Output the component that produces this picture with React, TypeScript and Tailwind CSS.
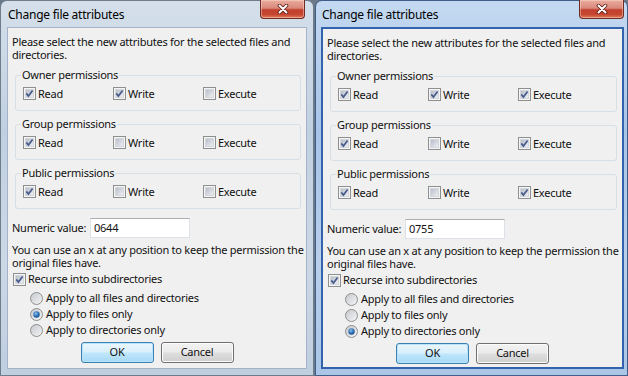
import React from 'react';

type Dialog = {
  value: string;
  perms: boolean[][];
  apply: number;
  active: boolean;
};

const dialogs: Dialog[] = [
  {
    value: '0644',
    perms: [
      [true, true, false],
      [true, false, false],
      [true, false, false],
    ],
    apply: 1,
    active: false,
  },
  {
    value: '0755',
    perms: [
      [true, true, true],
      [true, false, true],
      [true, false, true],
    ],
    apply: 2,
    active: true,
  },
];

const groups = ['Owner permissions', 'Group permissions', 'Public permissions'];
const cols = ['Read', 'Write', 'Execute'];
const applyTo = ['Apply to all files and directories', 'Apply to files only', 'Apply to directories only'];

function CheckBox({ on }: { on: boolean }) {
  return (
    <svg width="13" height="13" viewBox="0 0 13 13" className="shrink-0">
      <defs>
        <linearGradient id="cbfill" x1="0" y1="0" x2="1" y2="1">
          <stop offset="0" stopColor="#b5bac6" />
          <stop offset="1" stopColor="#f1f2f6" />
        </linearGradient>
      </defs>
      <rect x="0.5" y="0.5" width="12" height="12" fill="#f5f5f5" stroke="#8e8f8f" />
      <rect x="2.5" y="2.5" width="8" height="8" fill="url(#cbfill)" stroke="#d3d6db" />
      {on && <path d="M3.3 6.4 L5.4 9 L9.6 3.4" stroke="#485c8c" strokeWidth="1.7" fill="none" />}
    </svg>
  );
}

function Radio({ on }: { on: boolean }) {
  return (
    <svg width="13" height="13" viewBox="0 0 13 13" className="shrink-0">
      <defs>
        <linearGradient id="rbfill" x1="0" y1="0" x2="1" y2="1">
          <stop offset="0" stopColor="#c2c6cc" />
          <stop offset="1" stopColor="#f7f7f7" />
        </linearGradient>
        <radialGradient id="rbdot" cx="0.4" cy="0.35" r="0.7">
          <stop offset="0" stopColor="#8cc3ee" />
          <stop offset="0.6" stopColor="#2c6db0" />
          <stop offset="1" stopColor="#174d87" />
        </radialGradient>
      </defs>
      <circle cx="6.5" cy="6.5" r="6" fill="url(#rbfill)" stroke="#8e8f8f" />
      {on && <circle cx="6.5" cy="6.5" r="3.2" fill="url(#rbdot)" />}
    </svg>
  );
}

function CloseButton() {
  return (
    <div className="w-[45px] h-[19px] -mt-[1px] flex items-center justify-center rounded-b-[4px] border border-t-0 border-[#6e2b23] bg-[linear-gradient(180deg,#e9ad9f_0%,#d9887a_45%,#c23f2c_55%,#c6462f_80%,#de7d58_100%)] shadow-[inset_0_0_0_1px_rgba(255,220,210,0.45)]">
      <svg width="12" height="10" viewBox="0 0 12 10">
        <path d="M2.5 1.5 L9.5 8.5 M9.5 1.5 L2.5 8.5" stroke="#5c1b12" strokeWidth="3.6" strokeLinecap="round" />
        <path d="M2.5 1.5 L9.5 8.5 M9.5 1.5 L2.5 8.5" stroke="#ffffff" strokeWidth="2" strokeLinecap="round" />
      </svg>
    </div>
  );
}

function Window({ d }: { d: Dialog }) {
  return (
    <div
      className={
        d.active
          ? 'w-[313px] h-[376px] flex flex-col rounded-t-[7px] border border-[#3e5f8a] pl-[5px] pr-[3px] pb-[6px] bg-[linear-gradient(180deg,#c4d9f1_0%,#a8c4e7_35%,#b9d0ec_70%,#aac5e6_100%)]'
          : 'w-[314px] h-[376px] flex flex-col rounded-t-[7px] border border-[#6e7c8c] px-[6px] pb-[6px] bg-[linear-gradient(180deg,#d4dfea_0%,#c1d0e1_35%,#ccd8e6_70%,#bfcee0_100%)]'
      }
    >
      <div className="h-[26px] flex items-start justify-between">
        <span className="pt-[6px] pl-[1px] text-[12px] leading-[15px] text-black">Change file attributes</span>
        <div className={d.active ? 'mr-0' : 'mr-[2px]'}>
          <CloseButton />
        </div>
      </div>
      <div
        className={
          d.active
            ? 'flex-1 flex flex-col bg-[#f0f0f0] border-2 border-[#3263ac]'
            : 'flex-1 flex flex-col bg-[#f0f0f0] border border-[#a3b4c8]'
        }
      >
        <p className="px-[4px] pt-[7px] text-[11px] leading-[13px] whitespace-nowrap">
          Please select the new attributes for the selected files and
          <br />
          directories.
        </p>

        <div className="mt-[14px] ml-[7px] mr-[5px] flex flex-col gap-[13px]">
          {groups.map((g, gi) => (
            <div key={g} className="h-[36px] border border-[#d5dfe5] rounded-[3px]">
              <div className="-mt-[8px] ml-[5px] w-fit px-[1px] bg-[#f0f0f0] text-[11px] leading-[13px]">{g}</div>
              <div className="mt-[6px] ml-[7px] flex">
                {cols.map((c, ci) => (
                  <div key={c} className="w-[90px] flex items-center gap-[2px] text-[11px] leading-[13px]">
                    <CheckBox on={d.perms[gi][ci]} />
                    <span>{c}</span>
                  </div>
                ))}
              </div>
            </div>
          ))}
        </div>

        <div className="mt-[9px] ml-[4px] flex items-center text-[11px]">
          <span className="w-[78px]">Numeric value:</span>
          <div className="w-[100px] h-[20px] flex items-center pl-[3px] bg-white border border-[#dde2e8] border-t-[#abadb3]">
            {d.value}
          </div>
        </div>

        <p className="mt-[5px] px-[4px] text-[11px] leading-[13px] whitespace-nowrap">
          You can use an x at any position to keep the permission the
          <br />
          original files have.
        </p>

        <div className="mt-[4px] ml-[5px] h-[13px] flex items-center gap-[2px] text-[11px]">
          <CheckBox on />
          <span>Recurse into subdirectories</span>
        </div>

        <div className="mt-[4px] ml-[22px] flex flex-col">
          {applyTo.map((a, ai) => (
            <div key={a} className="h-[16px] flex items-center gap-[3px] text-[11px]">
              <Radio on={ai === d.apply} />
              <span>{a}</span>
            </div>
          ))}
        </div>

        <div className="mt-[4px] flex justify-center gap-[7px] text-[11px]">
          <button className="w-[73px] h-[21px] rounded-[3px] border border-[#3c7fb1] bg-[linear-gradient(180deg,#eaf6fd_0%,#d9f0fc_45%,#bee6fd_55%,#a7d9f5_100%)] shadow-[inset_0_0_0_1px_#b9e3fa]">
            OK
          </button>
          <button className="w-[73px] h-[21px] rounded-[3px] border border-[#707070] bg-[linear-gradient(180deg,#f2f2f2_0%,#ebebeb_45%,#dddddd_55%,#cfcfcf_100%)] shadow-[inset_0_0_0_1px_#fcfcfc]">
            Cancel
          </button>
        </div>
      </div>
    </div>
  );
}

export default function App() {
  return (
    <div className="w-[628px] h-[376px] flex gap-[1px] bg-[#6a7888] overflow-hidden font-['Noto_Sans',sans-serif] tracking-[-0.25px] text-[#111]">
      {dialogs.map((d) => (
        <Window key={d.value} d={d} />
      ))}
    </div>
  );
}
